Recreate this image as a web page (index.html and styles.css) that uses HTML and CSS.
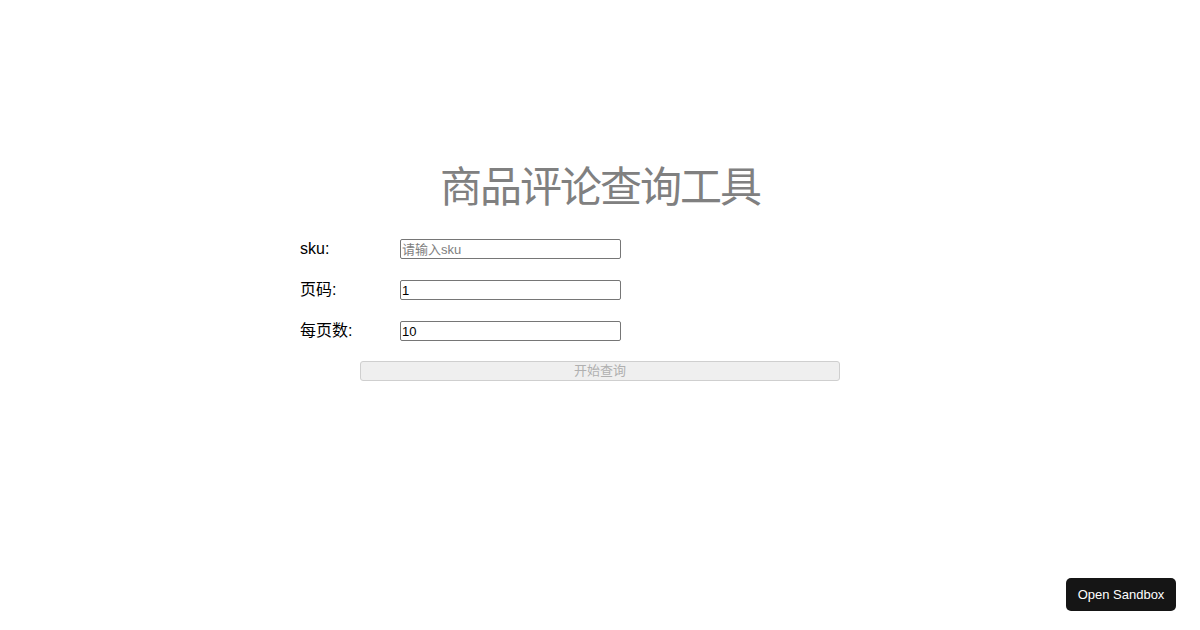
FILE: index.html
```html
<!DOCTYPE html>
<html lang="zh-CN">
<head>
<meta charset="utf-8">
<title>商品评论查询工具</title>
<link rel="stylesheet" href="styles.css">
</head>
<body>
<main class="page">
  <h1 class="title">商品评论查询工具</h1>
  <form class="form">
    <div class="row">
      <label class="label" for="sku">sku:</label>
      <input class="field" id="sku" type="text" placeholder="请输入sku">
    </div>
    <div class="row">
      <label class="label" for="page">页码:</label>
      <input class="field" id="page" type="text" value="1">
    </div>
    <div class="row">
      <label class="label" for="size">每页数:</label>
      <input class="field" id="size" type="text" value="10">
    </div>
    <button class="submit" type="button" disabled>开始查询</button>
  </form>
</main>
<a class="sandbox" href="#">Open Sandbox</a>
</body>
</html>
```

FILE: styles.css
```css
html, body {
  margin: 0;
  padding: 0;
  background: #ffffff;
  font-family: "Liberation Sans", Arial, "Noto Sans CJK SC", sans-serif;
}

.page {
  display: flex;
  flex-direction: column;
  align-items: center;
  padding-top: 163px;
}

.title {
  margin: 0;
  font-size: 42px;
  line-height: 50px;
  font-weight: normal;
  color: #808080;
  letter-spacing: -2px;
}

.form {
  width: 600px;
  margin-top: 26px;
  display: flex;
  flex-direction: column;
  align-items: center;
  gap: 21px;
}

.row {
  width: 600px;
  display: grid;
  grid-template-columns: 100px 221px;
  align-items: center;
}

.label {
  font-size: 16px;
  line-height: 20px;
  color: #000;
}

.field {
  box-sizing: border-box;
  width: 221px;
  height: 20px;
  margin: 0;
  padding: 0 1px;
  border: 1px solid #767676;
  border-radius: 2px;
  font-family: "Liberation Sans", Arial, "Noto Sans CJK SC", sans-serif;
  font-size: 13px;
  color: #000;
  background: #fff;
}

.field::placeholder {
  color: #808080;
}

.submit {
  box-sizing: border-box;
  width: 480px;
  height: 20px;
  margin: -1px 0 0;
  padding: 0;
  border: 1px solid #cfcfcf;
  border-radius: 3px;
  background: #efefef;
  color: #b0b0b0;
  font-family: "Liberation Sans", Arial, "Noto Sans CJK SC", sans-serif;
  font-size: 13px;
  line-height: 18px;
}

.sandbox {
  position: fixed;
  right: 24px;
  bottom: 19px;
  box-sizing: border-box;
  width: 110px;
  height: 33px;
  display: flex;
  align-items: center;
  justify-content: center;
  border-radius: 5px;
  background: #151515;
  color: #ffffff;
  font-family: "Liberation Sans", Arial, sans-serif;
  font-size: 13px;
  text-decoration: none;
}
```
